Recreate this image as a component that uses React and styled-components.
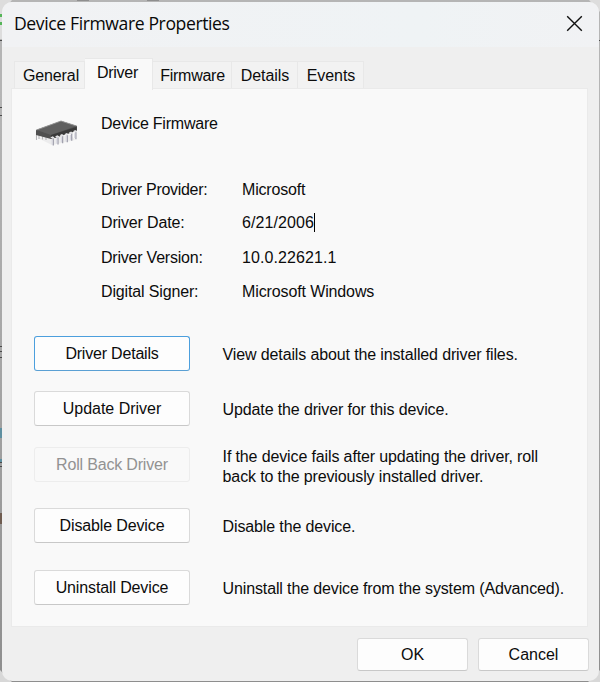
import React, { useState } from 'react';
import styled, { createGlobalStyle, css } from 'styled-components';

const GlobalStyle = createGlobalStyle`
  * {
    box-sizing: border-box;
  }

  body {
    margin: 0;
    background-color: #b4b4b4;
    font-family: 'Liberation Sans', Arial, sans-serif;
    font-size: 16px;
    color: #0c0c0c;
  }
`;

const Desktop = styled.div`
  position: relative;
  width: 600px;
  height: 682px;
  padding: 2px 1px 1px 2px;
  overflow: hidden;
  background: linear-gradient(to bottom, #b5b5b5 0, #b5b5b5 90px, #a6a6a6 350px, #8e8e8e 100%);
`;

const Backdrop = styled.svg`
  position: absolute;
  top: 0;
  left: 0;
`;

const Dialog = styled.div`
  position: relative;
  display: flex;
  flex-direction: column;
  height: 679px;
  border-radius: 10px;
  overflow: hidden;
  background-color: #efefef;
`;

const TitleBar = styled.div`
  display: flex;
  justify-content: space-between;
  flex: none;
  height: 45px;
  padding: 9px 16px 0 12px;
  background: linear-gradient(to right, #f1f2f4, #eff3f5 70%, #f1f2f4);
`;

const Title = styled.div`
  font-family: 'Open Sans', 'Noto Sans', sans-serif;
  font-size: 17.6px;
  line-height: 24px;
  letter-spacing: -0.4px;
  color: #080808;
  white-space: nowrap;
`;

const CloseButton = styled.button`
  width: 17px;
  height: 17px;
  margin-top: 4px;
  padding: 0;
  border: none;
  background: none;

  svg {
    display: block;
  }
`;

const TabList = styled.div`
  display: flex;
  align-items: flex-end;
  flex: none;
  height: 41px;
  padding-left: 12px;
`;

const Tab = styled.button`
  flex: none;
  width: ${props => props.$width}px;
  height: 27px;
  padding: 2px 0 0 1px;
  border: 1px solid #e8e8e8;
  border-left-width: ${props => (props.$first ? 1 : 0)}px;
  border-bottom: none;
  background-color: #f2f2f2;
  font: inherit;
  line-height: 22px;
  letter-spacing: ${props => props.$spacing || 0}px;
  color: inherit;
  white-space: nowrap;

  ${props => props.$first && css`
    padding-left: 3px;
  `}

  ${props => props.$active && css`
    position: relative;
    z-index: 1;
    height: 32px;
    margin-bottom: -2px;
    padding: 0 2px 4px 0;
    background-color: #f9f9f9;
  `}
`;

const Panel = styled.div`
  flex: none;
  width: 577px;
  height: 539px;
  margin-left: 9px;
  padding: 15px 20px 0 22px;
  border: 1px solid #eaeaea;
  background-color: #f9f9f9;
`;

const DeviceHeader = styled.div`
  display: flex;
  height: 69px;
`;

const DeviceIcon = styled.svg`
  flex: none;
  width: 48px;
  height: 40px;
  margin: 12px 19px 0 0;
`;

const Text = styled.span`
  line-height: 20px;
  letter-spacing: ${props => props.$spacing || 0}px;
  white-space: pre-line;
`;

const DeviceName = styled(Text)`
  margin-top: 10px;
`;

const InfoList = styled.div`
  display: grid;
  grid-template-columns: 141px 1fr;
  grid-template-rows: 33px 35px 34px 34px;
  margin: 7px 0 0 67px;
`;

const Caret = styled.i`
  display: inline-block;
  width: 1px;
  height: 19px;
  vertical-align: -4px;
  background-color: #000;
`;

const ActionRow = styled.div`
  display: flex;
  height: 35px;
  margin-top: ${props => props.$gap}px;
`;

const ActionText = styled(Text)`
  flex: none;
  margin: ${props => (props.$tall ? '0' : '9px')} 0 0 32.6px;
`;

const Button = styled.button`
  flex: none;
  width: ${props => props.$width || 156}px;
  height: ${props => props.$height || 35}px;
  padding: 0;
  border: 1px solid #dadada;
  border-bottom-color: #c8c8c8;
  border-radius: 3px;
  background-color: #fdfdfd;
  font: inherit;
  line-height: 32px;
  letter-spacing: ${props => props.$spacing || 0}px;
  color: inherit;

  ${props => props.$primary && css`
    border-color: #4c9fdd;
    border-bottom-color: #5aa0d4;
  `}

  &:disabled {
    border-color: #ededed;
    background-color: #f9f9f9;
    color: #929292;
  }
`;

const Footer = styled.div`
  display: flex;
  justify-content: flex-end;
  gap: 10px;
  padding: 11px 10px 0 0;
`;

const tabs = [
  { name: 'General', width: 71, spacing: -0.1 },
  { name: 'Driver', width: 68, spacing: -0.25 },
  { name: 'Firmware', width: 79, spacing: -0.25 },
  { name: 'Details', width: 66, spacing: -0.05 },
  { name: 'Events', width: 66, spacing: -0.05 },
];

const info = [
  { label: 'Driver Provider:', spacing: -0.3, value: 'Microsoft', valueSpacing: -0.17 },
  { label: 'Driver Date:', spacing: -0.15, value: '6/21/2006', valueSpacing: 0.09, caret: true },
  { label: 'Driver Version:', spacing: -0.22, value: '10.0.22621.1', valueSpacing: 0.09 },
  { label: 'Digital Signer:', spacing: -0.15, value: 'Microsoft Windows', valueSpacing: -0.12 },
];

const actions = [
  {
    name: 'Driver Details',
    spacing: -0.2,
    text: 'View details about the installed driver files.',
    gap: 20,
    primary: true,
  },
  { name: 'Update Driver', spacing: -0.02, text: 'Update the driver for this device.', gap: 20 },
  {
    name: 'Roll Back Driver',
    spacing: -0.18,
    text: 'If the device fails after updating the driver, roll\nback to the previously installed driver.',
    gap: 21,
    disabled: true,
  },
  { name: 'Disable Device', spacing: -0.13, text: 'Disable the device.', gap: 26 },
  {
    name: 'Uninstall Device',
    spacing: -0.13,
    text: 'Uninstall the device from the system (Advanced).',
    gap: 27,
  },
];

const pins = [[18, 28.5], [22.7, 27.5], [27.3, 26.2], [32, 25.2], [36.4, 23.8], [40.6, 22.2]];

const ChipIcon = () => (
  <DeviceIcon viewBox="0 0 48 40">
    <path d="M4 22l14 7 23-5-4-5z" fill="#e2e2e4" opacity="0.6" />
    <path d="M2.5 16v8M5 18v5M8.5 19v4.5M12 19.5v4.5" stroke="#b5b5b8" strokeWidth="1.1" />
    <path d="M2 14L27 5 43 10v4.5L17 23 2 19z" fill="#505050" />
    <path d="M2.5 14L27 5 42.5 10 17 19z" fill="#606060" />
    <path d="M2.5 14L27 5 42.5 10" fill="none" stroke="#989898" strokeWidth="0.9" />
    <path d="M17 19L42.5 11v4L17 23z" fill="#3a3a3a" />
    {pins.map(([x, y]) => (
      <g key={x}>
        <path d={`M${x - 1.6} ${y - 7}l2.2-1.2 1.7 1v1.8l-2.2-.4z`} fill="#e2e2e5" />
        <path d={`M${x + 1.3} ${y - 6}v7`} stroke="#a2a2ae" strokeWidth="1.3" />
        <path d={`M${x + 0.1} ${y - 5}v5`} stroke="#d8d8e2" strokeWidth="1" />
      </g>
    ))}
  </DeviceIcon>
);

const App = () => {
  const [activeTab, setActiveTab] = useState('Driver');

  return (
    <>
      <GlobalStyle />
      <Desktop>
        {/* Slivers of the windows behind the dialog */}
        <Backdrop width="600" height="682">
          <path d="M0 0h12L2 12v27H0zM600 0h-11l11 12z" fill="#dddddd" />
          <path d="M0 14h2v3H0zM0 22h2v3H0z" fill="#55b559" />
          <path d="M77 0h12M147 0h12" stroke="#8f8f8f" strokeWidth="2" />
          <path
            d="M0 40.5h2M0 107.5h2M0 115.5h2M0 346.5h2M0 351.5h2M0 357.5h2M0 462.5h2M0 466.5h2M599 40.5h1"
            stroke="#4a4a4a"
          />
          <path d="M1 428v10M1 459v3" stroke="#5e8fa0" strokeWidth="2" />
          <path d="M1 513v11" stroke="#6f5c50" strokeWidth="2" />
          <path d="M0 670v12h12zM600 670v12h-12z" fill="#d8d8d8" />
        </Backdrop>
        <Dialog>
          <TitleBar>
            <Title>Device Firmware Properties</Title>
            <CloseButton aria-label="Close">
              <svg width="17" height="17" viewBox="0 0 17 17">
                <path d="M1.2 1.2l14.6 14.6M15.8 1.2L1.2 15.8" stroke="#111" strokeWidth="1.4" />
              </svg>
            </CloseButton>
          </TitleBar>
          <TabList>
            {tabs.map((tab, i) => (
              <Tab
                key={tab.name}
                $width={tab.width}
                $spacing={tab.spacing}
                $first={i === 0}
                $active={tab.name === activeTab}
                onClick={() => setActiveTab(tab.name)}
              >
                {tab.name}
              </Tab>
            ))}
          </TabList>
          <Panel>
            <DeviceHeader>
              <ChipIcon />
              <DeviceName $spacing={-0.22}>Device Firmware</DeviceName>
            </DeviceHeader>
            <InfoList>
              {info.map(row => (
                <React.Fragment key={row.label}>
                  <Text $spacing={row.spacing}>{row.label}</Text>
                  <Text $spacing={row.valueSpacing}>
                    {row.value}
                    {row.caret && <Caret />}
                  </Text>
                </React.Fragment>
              ))}
            </InfoList>
            {actions.map(action => (
              <ActionRow key={action.name} $gap={action.gap}>
                <Button $spacing={action.spacing} $primary={action.primary} disabled={action.disabled}>
                  {action.name}
                </Button>
                <ActionText $spacing={-0.13} $tall={action.disabled}>{action.text}</ActionText>
              </ActionRow>
            ))}
          </Panel>
          <Footer>
            <Button $width={111} $height={33}>OK</Button>
            <Button $width={111} $height={33}>Cancel</Button>
          </Footer>
        </Dialog>
      </Desktop>
    </>
  );
};

export default App;
